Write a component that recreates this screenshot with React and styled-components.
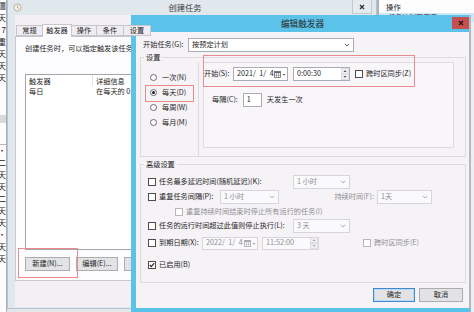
import React from "react";
import styled, { createGlobalStyle, css } from "styled-components";

const FONT = `"Noto Sans CJK SC", "Noto Sans", sans-serif`;
const BLUE = "#5bc3ea";

const GlobalStyle = createGlobalStyle`
  html, body { margin: 0; padding: 0; }
  body { font-family: ${FONT}; font-size: 7.2px; color: #1f1f1f; background: #e2e5e8; }
  * { box-sizing: border-box; }
`;

const Desktop = styled.div`
  position: relative;
  width: 474px;
  height: 312px;
  overflow: hidden;
  background: #e4e6e9;
`;

/* ---------- far left app ---------- */
const LeftApp = styled.div`
  position: absolute;
  left: 0;
  top: 0;
  width: 7px;
  height: 312px;
  background: #fdfcfd;
  border-right: 1px solid #a8b0b7;
  display: flex;
  flex-direction: column;
  overflow: hidden;
`;
const LeftLine = styled.div`
  height: ${(p) => p.$h || 12}px;
  flex: none;
  display: flex;
  justify-content: flex-end;
  align-items: center;
  overflow: hidden;
  white-space: nowrap;
  font-size: 8px;
  line-height: 1;
  color: #222;
  background: ${(p) => p.$bg || "transparent"};
  border-bottom: ${(p) => (p.$line ? "1px solid #b9b9b9" : "none")};
`;

/* ---------- right app ---------- */
const RightApp = styled.div`
  position: absolute;
  left: 377px;
  top: 0;
  width: 97px;
  height: 312px;
  background: #eeeff1;
  border-left: 2px solid #aab1b8;
  display: flex;
  flex-direction: column;
`;
const ActionsHeader = styled.div`
  height: 13px;
  background: #fdfdfd;
  padding-left: 7px;
  display: flex;
  align-items: center;
  font-size: 7.4px;
  color: #222;
`;
const ActionsRow = styled.div`
  height: 9px;
  background: #cfe6f6;
  padding-left: 9px;
  font-size: 7px;
  line-height: 9px;
  white-space: nowrap;
  overflow: hidden;
  color: #333;
`;

/* ---------- back window ---------- */
const BackWindow = styled.section`
  position: absolute;
  left: 7px;
  top: 0;
  width: 370px;
  height: 309px;
  background: #e0e7ed;
  border: 1px solid #b7c2cb;
  border-top: none;
  display: flex;
  flex-direction: column;
`;
const BackTitleBar = styled.header`
  height: 15px;
  flex: none;
  display: flex;
  align-items: center;
  padding-left: 5px;
`;
const BackTitle = styled.div`
  flex: 1;
  text-align: center;
  font-size: 8.3px;
  line-height: 15px;
  color: #3a3a3a;
  padding-right: 4px;
`;
const InactiveClose = styled.div`
  width: 20px;
  height: 14px;
  margin-right: 4px;
  align-self: flex-start;
  display: flex;
  align-items: center;
  justify-content: center;
  background: #e6ebef;
  border: 1px solid #c2cad1;
  border-top: none;
`;
const BackClient = styled.div`
  flex: 1;
  margin: 0 0 1px 7px;
  background: #f2f0f3;
  padding-top: 9px;
  display: flex;
  flex-direction: column;
`;
const TabStrip = styled.div`
  display: flex;
  align-items: flex-end;
  height: 12px;
  padding-left: 1px;
  position: relative;
  z-index: 1;
`;
const Tab = styled.div`
  width: ${(p) => p.$w}px;
  height: ${(p) => (p.$active ? 13 : 11)}px;
  margin-bottom: ${(p) => (p.$active ? -1 : 0)}px;
  border: 1px solid #c8c6cb;
  border-bottom: ${(p) => (p.$active ? "none" : "1px solid #c8c6cb")};
  background: ${(p) => (p.$active ? "#fcfbfd" : "#efedf1")};
  display: flex;
  align-items: center;
  justify-content: center;
  font-size: 7.2px;
  line-height: 1;
  white-space: nowrap;
  & + & {
    margin-left: -1px;
  }
`;
const TabPage = styled.div`
  height: 245px;
  border: 1px solid #cac8cd;
  background: #fcfbfd;
  padding: 6px 0 0 9px;
  display: flex;
  flex-direction: column;
  align-items: flex-start;
`;
const Hint = styled.div`
  line-height: 10px;
  white-space: nowrap;
`;
const TriggerList = styled.div`
  margin-top: 21px;
  width: 230px;
  height: 176px;
  border: 1px solid #a5a4a9;
  background: #fff;
`;
const ListRow = styled.div`
  display: grid;
  grid-template-columns: 67px 1fr;
  height: ${(p) => (p.$head ? 11 : 10)}px;
  align-items: center;
`;
const ListCell = styled.div`
  height: 100%;
  display: flex;
  align-items: center;
  padding-left: 3px;
  white-space: nowrap;
  border-right: ${(p) => (p.$sep ? "1px solid #e2e2e6" : "none")};
`;
const ButtonRow = styled.div`
  display: flex;
  gap: 6px;
  margin-top: 7px;
`;
const WinButton = styled.button`
  width: ${(p) => p.$w}px;
  height: 14px;
  padding: 0;
  margin: 0;
  font-family: ${FONT};
  font-size: 7.2px;
  line-height: 1;
  color: #1f1f1f;
  background: #e3e3e5;
  border: 1px solid ${(p) => (p.$default ? "#3d8ad2" : "#adadb0")};
  box-shadow: ${(p) => (p.$default ? "inset 0 0 0 1px #b9d8f2" : "none")};
  white-space: nowrap;
`;
const Highlighted = styled.div`
  position: relative;
  &::after {
    content: "";
    position: absolute;
    inset: ${(p) => p.$inset};
    border: 1px solid #e88b8e;
    pointer-events: none;
  }
`;

/* ---------- front dialog ---------- */
const Dialog = styled.section`
  position: absolute;
  left: 131px;
  top: 15px;
  width: 340px;
  height: 297px;
  background: #f6f3f7;
  border-left: 5px solid ${BLUE};
  border-bottom: 4px solid ${BLUE};
  border-right: 2px solid #b3b9bf;
  display: flex;
  flex-direction: column;
`;
const DialogTitleBar = styled.header`
  height: 17px;
  flex: none;
  background: ${BLUE};
  display: grid;
  grid-template-columns: 1fr auto 1fr;
  align-items: center;
`;
const DialogTitle = styled.div`
  grid-column: 2;
  font-size: 8.6px;
  line-height: 1;
  color: #2a2a2a;
  white-space: nowrap;
`;
const CloseButton = styled.div`
  grid-column: 3;
  justify-self: end;
  align-self: start;
  margin-top: 2px;
  width: 17px;
  height: 12px;
  background: #c74f50;
  display: flex;
  align-items: center;
  justify-content: center;
`;
const DialogBody = styled.div`
  flex: 1;
  padding-top: 6px;
  display: flex;
  flex-direction: column;
`;
const StartTaskRow = styled.div`
  margin-left: 7px;
  height: 14px;
  display: flex;
  align-items: center;
`;
const FixedLabel = styled.span`
  width: ${(p) => p.$w}px;
  flex: none;
  white-space: nowrap;
  line-height: 1;
  text-align: ${(p) => (p.$right ? "right" : "left")};
  padding-right: ${(p) => (p.$right ? 3 : 0)}px;
  margin-left: ${(p) => p.$ml || 0}px;
  color: ${(p) => (p.$disabled ? "#8f8d92" : "#1f1f1f")};
`;
const Group = styled.fieldset`
  margin: ${(p) => p.$mt || 0}px 3px 0 4px;
  padding: 0;
  border: 1px solid #dddbe0;
  min-width: 0;
`;
const Legend = styled.legend`
  margin-left: 3px;
  padding: 0 2px;
  font-size: 7.2px;
  line-height: 10px;
  height: 10px;
`;
const SettingsContent = styled.div`
  height: 94px;
  display: flex;
`;
const RadioColumn = styled.div`
  width: 58px;
  flex: none;
  border-right: 1px solid #dcdadf;
  padding-top: 8px;
  display: flex;
  flex-direction: column;
  align-items: flex-start;
`;
const RadioRow = styled.label`
  height: 15px;
  margin-left: 4px;
  padding-left: 5px;
  display: flex;
  align-items: center;
  gap: 5px;
  position: relative;
  white-space: nowrap;
  line-height: 1;
  ${(p) =>
    p.$highlight &&
    css`
      &::after {
        content: "";
        position: absolute;
        inset: 0 -8px -2px 0;
        border: 1px solid #e88b8e;
      }
    `}
`;
const RadioDot = styled.span`
  width: 7px;
  height: 7px;
  flex: none;
  border-radius: 50%;
  border: 1px solid #6a686d;
  background: #fff;
  display: flex;
  align-items: center;
  justify-content: center;
  &::before {
    content: "";
    width: 3px;
    height: 3px;
    border-radius: 50%;
    background: ${(p) => (p.$checked ? "#1f1f1f" : "transparent")};
  }
`;
const InnerPanel = styled.div`
  margin: 0 0 8px 4px;
  width: 251px;
  border: 1px solid #dddbe0;
  background: #f8f6f9;
  padding: 4px 0 0 0;
  display: flex;
  flex-direction: column;
  align-items: flex-start;
`;
const StartRow = styled.div`
  height: 14px;
  display: flex;
  align-items: center;
  gap: 5px;
  position: relative;
  &::after {
    content: "";
    position: absolute;
    inset: -12px -4px -6px -1px;
    border: 1px solid #e88b8e;
  }
`;
const IntervalRow = styled.div`
  margin: 12px 0 0 8px;
  height: 14px;
  display: flex;
  align-items: center;
  gap: 5px;
  white-space: nowrap;
  line-height: 1;
`;
const Field = styled.div`
  flex: none;
  width: ${(p) => p.$w}px;
  height: ${(p) => p.$h || 14}px;
  margin-left: ${(p) => p.$ml || 0}px;
  display: flex;
  align-items: center;
  border: 1px solid ${(p) => (p.$disabled ? "#d7d5da" : "#abadb3")};
  background: ${(p) => (p.$disabled ? "#faf9fb" : "#fff")};
  color: ${(p) => (p.$disabled ? "#8f8d92" : "#1f1f1f")};
  padding-left: 3px;
  line-height: 1;
  white-space: nowrap;
`;
const FieldText = styled.span`
  flex: 1;
  overflow: hidden;
`;
const FieldIcon = styled.span`
  flex: none;
  display: flex;
  align-items: center;
  height: 100%;
  padding-right: ${(p) => p.$pr || 0}px;
`;
const CheckField = styled.label`
  display: flex;
  align-items: center;
  gap: 3px;
  flex: none;
  width: ${(p) => (p.$w ? `${p.$w}px` : "auto")};
  margin-left: ${(p) => p.$ml || 0}px;
  white-space: nowrap;
  line-height: 1;
  color: ${(p) => (p.$disabled ? "#8f8d92" : "#1f1f1f")};
`;
const CheckBox = styled.span`
  width: 8px;
  height: 8px;
  flex: none;
  border: 1px solid ${(p) => (p.$disabled ? "#b9b7bc" : "#4d4b50")};
  background: #fff;
  display: flex;
  align-items: center;
  justify-content: center;
`;
const AdvContent = styled.div`
  padding: 6px 0 10px 7px;
  display: flex;
  flex-direction: column;
`;
const AdvRow = styled.div`
  height: 14px;
  margin-top: ${(p) => p.$mt || 0}px;
  padding-left: ${(p) => p.$indent || 0}px;
  display: flex;
  align-items: center;
`;
const ButtonBar = styled.div`
  display: flex;
  justify-content: flex-end;
  gap: 4px;
  margin-top: 5px;
  padding-right: 6px;
`;

/* ---------- icons ---------- */
const Chevron = ({ c = "#6b6b6b" }) => (
  <svg width="6" height="4" viewBox="0 0 6 4">
    <path d="M0.8 0.8 L3 3 L5.2 0.8" fill="none" stroke={c} strokeWidth="0.9" />
  </svg>
);
const DatePick = ({ c = "#6b6b6b" }) => (
  <svg width="12" height="7" viewBox="0 0 12 7">
    <rect x="0.5" y="0.5" width="6" height="6" fill="#fff" stroke={c} strokeWidth="0.8" />
    <rect x="0.5" y="0.5" width="6" height="1.6" fill={c} />
    <path d="M2.5 2 V6.5 M4.5 2 V6.5 M0.5 4.2 H6.5" stroke={c} strokeWidth="0.5" />
    <path d="M8.5 3 L11.5 3 L10 4.8 Z" fill={c} />
  </svg>
);
const Spin = ({ c = "#6b6b6b" }) => (
  <svg width="8" height="12" viewBox="0 0 8 12">
    <rect x="0.5" y="0.5" width="7" height="5" fill="#f1f0f2" stroke="#cfcdd2" strokeWidth="0.6" />
    <rect x="0.5" y="6.5" width="7" height="5" fill="#f1f0f2" stroke="#cfcdd2" strokeWidth="0.6" />
    <path d="M2.3 4 L4 2.2 L5.7 4 Z" fill={c} />
    <path d="M2.3 8 L4 9.8 L5.7 8 Z" fill={c} />
  </svg>
);
const Tick = () => (
  <svg width="6" height="6" viewBox="0 0 6 6">
    <path d="M0.8 3 L2.3 4.6 L5.2 1.2" fill="none" stroke="#1f1f1f" strokeWidth="1.1" />
  </svg>
);
const XMark = ({ c = "#222", s = 6 }) => (
  <svg width={s} height={s} viewBox="0 0 6 6">
    <path d="M1 1 L5 5 M5 1 L1 5" stroke={c} strokeWidth="1.3" />
  </svg>
);
const TaskIcon = () => (
  <svg width="9" height="9" viewBox="0 0 9 9">
    <circle cx="4.5" cy="4.5" r="3.6" fill="#f4f1e4" stroke="#a9a58f" strokeWidth="0.8" />
    <path d="M4.5 2.5 V4.6 L5.9 5.4" fill="none" stroke="#8a8672" strokeWidth="0.7" />
  </svg>
);

const Select = ({ w, text, disabled, ml }) => (
  <Field $w={w} $disabled={disabled} $ml={ml} $h={14}>
    <FieldText>{text}</FieldText>
    <FieldIcon $pr={3}>
      <Chevron c={disabled ? "#a9a7ac" : "#555"} />
    </FieldIcon>
  </Field>
);
const DateField = ({ w, text, disabled, h, ml }) => (
  <Field $w={w} $disabled={disabled} $h={h} $ml={ml}>
    <FieldText>{text}</FieldText>
    <FieldIcon $pr={1}>
      <DatePick c={disabled ? "#a9a7ac" : "#6b6b6b"} />
    </FieldIcon>
  </Field>
);
const TimeField = ({ w, text, disabled, h, ml }) => (
  <Field $w={w} $disabled={disabled} $h={h} $ml={ml}>
    <FieldText>{text}</FieldText>
    <FieldIcon $pr={0}>
      <Spin c={disabled ? "#a9a7ac" : "#555"} />
    </FieldIcon>
  </Field>
);
const Check = ({ label, checked, disabled, w, ml }) => (
  <CheckField $w={w} $disabled={disabled} $ml={ml}>
    <CheckBox $disabled={disabled}>{checked && <Tick />}</CheckBox>
    <span>{label}</span>
  </CheckField>
);

const leftTop = ["僵", "天", "7", "重", "天", "天", "天"];
const leftBottom = ["·", "二", "天", "天", "二", "天", "天", "·", "天", "天"];

export default function App() {
  return (
    <>
      <GlobalStyle />
      <Desktop>
        <LeftApp>
          {leftTop.map((t, i) => (
            <LeftLine key={`a${i}`}>{t}</LeftLine>
          ))}
          <LeftLine $h={31} />
          <LeftLine $h={8} $bg="#d9d9db" />
          <LeftLine $h={22} $line />
          {leftBottom.map((t, i) => (
            <LeftLine key={`b${i}`}>{t}</LeftLine>
          ))}
        </LeftApp>

        <RightApp>
          <ActionsHeader>操作</ActionsHeader>
          <ActionsRow>任务计划程序库</ActionsRow>
        </RightApp>

        <BackWindow>
          <BackTitleBar>
            <TaskIcon />
            <BackTitle>创建任务</BackTitle>
            <InactiveClose>
              <XMark c="#333" s={6} />
            </InactiveClose>
          </BackTitleBar>
          <BackClient>
            <TabStrip>
              <Tab $w={27}>常规</Tab>
              <Tab $w={30} $active>触发器</Tab>
              <Tab $w={26}>操作</Tab>
              <Tab $w={28}>条件</Tab>
              <Tab $w={28}>设置</Tab>
            </TabStrip>
            <TabPage>
              <Hint>创建任务时，可以指定触发该任务的条件。</Hint>
              <TriggerList>
                <ListRow $head>
                  <ListCell $sep>触发器</ListCell>
                  <ListCell>详细信息</ListCell>
                </ListRow>
                <ListRow>
                  <ListCell>每日</ListCell>
                  <ListCell>在每天的 0:00:30</ListCell>
                </ListRow>
              </TriggerList>
              <ButtonRow>
                <Highlighted $inset="-9px -8px -7px -7px">
                  <WinButton $w={45}>新建(N)...</WinButton>
                </Highlighted>
                <WinButton $w={42}>编辑(E)...</WinButton>
                <WinButton $w={42}>删除(D)</WinButton>
              </ButtonRow>
            </TabPage>
          </BackClient>
        </BackWindow>

        <Dialog>
          <DialogTitleBar>
            <DialogTitle>编辑触发器</DialogTitle>
            <CloseButton>
              <XMark c="#2a1414" s={6} />
            </CloseButton>
          </DialogTitleBar>
          <DialogBody>
            <StartTaskRow>
              <FixedLabel $w={45}>开始任务(G):</FixedLabel>
              <Select w={166} text="按预定计划" />
            </StartTaskRow>

            <Group>
              <Legend>设置</Legend>
              <SettingsContent>
                <RadioColumn>
                  <RadioRow>
                    <RadioDot />
                    一次(N)
                  </RadioRow>
                  <RadioRow $highlight>
                    <RadioDot $checked />
                    每天(D)
                  </RadioRow>
                  <RadioRow>
                    <RadioDot />
                    每周(W)
                  </RadioRow>
                  <RadioRow>
                    <RadioDot />
                    每月(M)
                  </RadioRow>
                </RadioColumn>
                <InnerPanel>
                  <StartRow>
                    <FixedLabel $w={24}>开始(S):</FixedLabel>
                    <DateField w={55} text={"2021/\u20021/\u20024"} />
                    <TimeField w={57} text="0:00:30" />
                    <Check label="跨时区同步(Z)" />
                  </StartRow>
                  <IntervalRow>
                    <span>每隔(C):</span>
                    <Field $w={19}>1</Field>
                    <span>天发生一次</span>
                  </IntervalRow>
                </InnerPanel>
              </SettingsContent>
            </Group>

            <Group $mt={2}>
              <Legend>高级设置</Legend>
              <AdvContent>
                <AdvRow>
                  <Check w={145} label="任务最多延迟时间(随机延迟)(K):" />
                  <Select w={57} text="1 小时" disabled />
                </AdvRow>
                <AdvRow $mt={1}>
                  <Check w={72} label="重复任务间隔(P):" />
                  <Select w={59} text="1 小时" disabled />
                  <FixedLabel $w={44} $ml={54} $right $disabled>
                    持续时间(F):
                  </FixedLabel>
                  <Select w={55} text="1天" disabled />
                </AdvRow>
                <AdvRow $mt={1} $indent={27}>
                  <Check label="重复持续时间结束时停止所有运行的任务(I)" disabled />
                </AdvRow>
                <AdvRow>
                  <Check w={145} label="任务的运行时间超过此值则停止执行(L):" />
                  <Select w={57} text="3 天" disabled />
                </AdvRow>
                <AdvRow $mt={3}>
                  <Check w={54} label="到期日期(X):" />
                  <DateField w={56} h={13} text={"2022/\u20021/\u20024"} disabled />
                  <TimeField w={57} h={13} ml={4} text="11:52:00" disabled />
                  <Check ml={44} label="跨时区同步(E)" disabled />
                </AdvRow>
                <AdvRow $mt={8}>
                  <Check label="已启用(B)" checked />
                </AdvRow>
              </AdvContent>
            </Group>

            <ButtonBar>
              <WinButton $w={42} $default>确定</WinButton>
              <WinButton $w={44}>取消</WinButton>
            </ButtonBar>
          </DialogBody>
        </Dialog>
      </Desktop>
    </>
  );
}
